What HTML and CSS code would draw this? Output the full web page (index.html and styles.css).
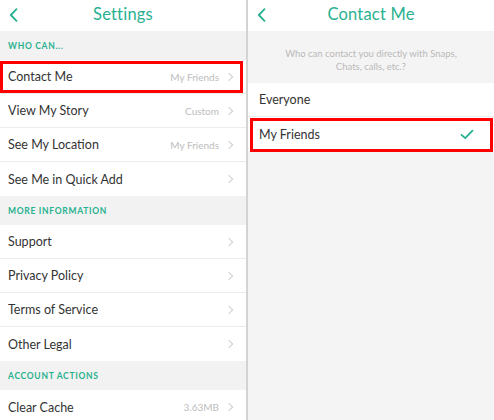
FILE: index.html
```html
<!DOCTYPE html>
<html>
<head>
<meta charset="utf-8">
<link rel="stylesheet" href="styles.css">
</head>
<body>
<div class="screen">
  <section class="panel left">
    <header class="nav">
      <svg class="back" width="9" height="14" viewBox="0 0 9 14"><path d="M7.5 1.2 L1.8 7 L7.5 12.8" fill="none" stroke="#28b190" stroke-width="1.8" stroke-linecap="round" stroke-linejoin="round"/></svg>
      <h1 class="title">Settings</h1>
    </header>
    <div class="section">WHO CAN...</div>
    <div class="row marked"><span class="label">Contact Me</span><span class="value">My Friends</span><span class="chev"></span></div>
    <div class="row"><span class="label">View My Story</span><span class="value">Custom</span><span class="chev"></span></div>
    <div class="row"><span class="label">See My Location</span><span class="value">My Friends</span><span class="chev"></span></div>
    <div class="row last"><span class="label">See Me in Quick Add</span><span class="value"></span><span class="chev"></span></div>
    <div class="section">MORE INFORMATION</div>
    <div class="row"><span class="label">Support</span><span class="value"></span><span class="chev"></span></div>
    <div class="row"><span class="label">Privacy Policy</span><span class="value"></span><span class="chev"></span></div>
    <div class="row"><span class="label">Terms of Service</span><span class="value"></span><span class="chev"></span></div>
    <div class="row last"><span class="label">Other Legal</span><span class="value"></span><span class="chev"></span></div>
    <div class="section">ACCOUNT ACTIONS</div>
    <div class="row last"><span class="label">Clear Cache</span><span class="value">3.63MB</span><span class="chev"></span></div>
  </section>
  <section class="panel right">
    <header class="nav">
      <svg class="back" width="9" height="14" viewBox="0 0 9 14"><path d="M7.5 1.2 L1.8 7 L7.5 12.8" fill="none" stroke="#28b190" stroke-width="1.8" stroke-linecap="round" stroke-linejoin="round"/></svg>
      <h1 class="title">Contact Me</h1>
    </header>
    <p class="desc">Who can contact you directly with Snaps,<br>Chats, calls, etc.?</p>
    <div class="row option"><span class="label">Everyone</span></div>
    <div class="row option marked-r"><span class="label">My Friends</span>
      <svg class="check" width="14" height="11" viewBox="0 0 14 11"><path d="M1.5 5.8 L5.2 9.2 L12.5 1.6" fill="none" stroke="#28b190" stroke-width="1.8" stroke-linecap="round" stroke-linejoin="round"/></svg>
    </div>
  </section>
</div>
</body>
</html>
```
FILE: styles.css
```css
html, body {
  margin: 0;
  padding: 0;
  background: #fff;
}
body {
  font-family: "Lato", "Open Sans", sans-serif;
  color: #333;
}
.screen {
  display: flex;
  width: 494px;
  height: 420px;
  overflow: hidden;
}
.panel {
  display: flex;
  flex-direction: column;
}
.left {
  width: 246px;
  flex: none;
  background: #fff;
  border-right: 2px solid #d3d3d3;
}
.right {
  flex: 1;
  background: #f4f4f4;
}
.nav {
  height: 31px;
  flex: none;
  position: relative;
  display: flex;
  align-items: center;
  justify-content: center;
  background: #fff;
  box-sizing: border-box;
  padding-bottom: 3px;
}
.back {
  position: absolute;
  left: 9px;
  top: 8px;
}
.title {
  margin: 0;
  font-size: 16.5px;
  font-weight: 400;
  color: #28b190;
  letter-spacing: 0.2px;
}
.section {
  height: 29px;
  flex: none;
  background: #f2f2f2;
  color: #28b190;
  font-size: 8.5px;
  font-weight: 700;
  letter-spacing: 0.7px;
  display: flex;
  align-items: center;
  padding-left: 8px;
  padding-top: 1px;
  box-sizing: border-box;
}
.row {
  height: 34px;
  flex: none;
  display: flex;
  align-items: center;
  padding-left: 8px;
  padding-right: 12px;
  box-sizing: border-box;
  border-bottom: 1px solid #ececec;
  background: #fff;
  position: relative;
}
.row.last {
  border-bottom: none;
}
.label {
  flex: 1;
  font-size: 12.5px;
  color: #333;
}
.value {
  font-size: 10px;
  color: #bdbdbd;
  margin-right: 7px;
}
.chev {
  width: 5px;
  height: 5px;
  border-right: 1.3px solid #cfcfcf;
  border-top: 1.3px solid #cfcfcf;
  transform: rotate(45deg);
  margin-right: 2px;
}
.marked::after {
  content: "";
  position: absolute;
  left: 0;
  top: 1px;
  right: 3px;
  bottom: 0;
  border: 3px solid #f00;
}
.desc {
  margin: 0;
  height: 52px;
  box-sizing: border-box;
  padding-top: 16px;
  text-align: center;
  font-size: 9.5px;
  line-height: 13px;
  color: #b9b9b9;
  flex: none;
}
.option {
  padding-left: 11px;
  padding-right: 20px;
}
.marked-r {
  border-bottom: none;
}
.marked-r::after {
  content: "";
  position: absolute;
  left: 2px;
  top: 1px;
  right: 1px;
  bottom: -1px;
  border: 3px solid #f00;
}
.check {
  margin-top: 1px;
}
```
